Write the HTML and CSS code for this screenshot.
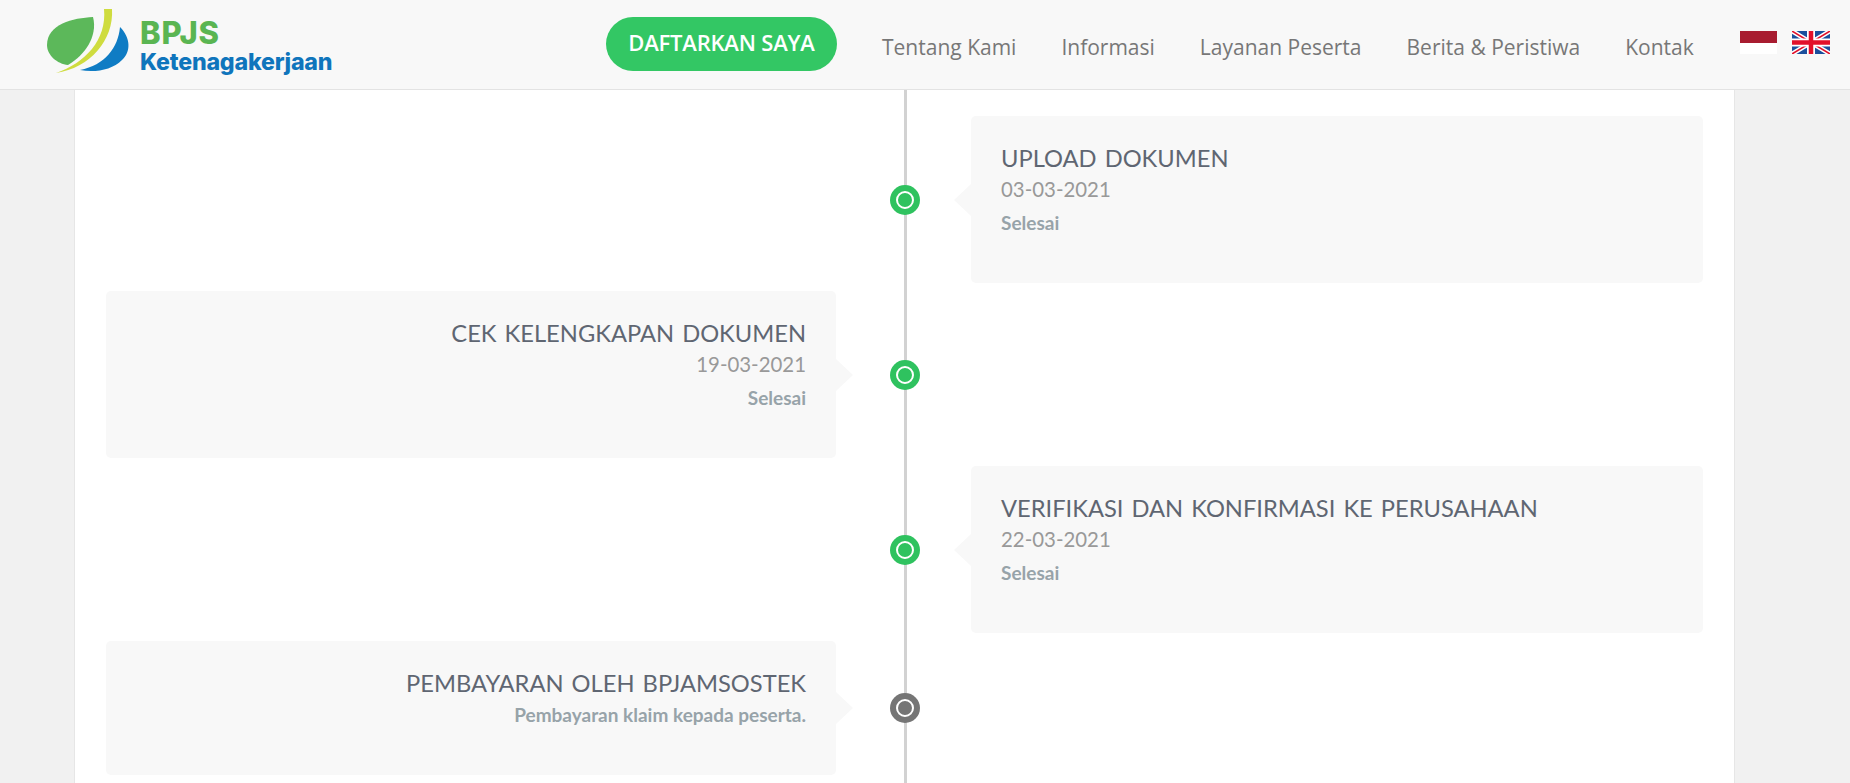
FILE: index.html
```html
<!DOCTYPE html>
<html lang="id">
<head>
<meta charset="utf-8">
<title>BPJS Ketenagakerjaan</title>
<link rel="stylesheet" href="styles.css">
</head>
<body>
<header class="topbar">
  <a class="logo" href="#">
    <svg class="logo-mark" viewBox="0 0 100 80" width="100" height="80" aria-hidden="true">
      <path fill="#5cb85a" d="M46 17C26 18 0 24 0 45C0 55 10 64 21 65C38 55 51 36 46 17Z"/>
      <path fill="#cfdc3f" d="M57 9H65C67 40 43 68 9 73C38 63 60 40 57 9Z"/>
      <path fill="#0f7cc4" d="M73 27C84 38 84 52 75 60C65 70 48 73 33 70C58 65 71 48 73 27Z"/>
    </svg>
    <span class="logo-text"><span class="logo-top">BPJS</span><span class="logo-bottom">Ketenagakerjaan</span></span>
  </a>
  <a class="cta" href="#">DAFTARKAN SAYA</a>
  <nav class="nav">
    <a href="#">Tentang Kami</a>
    <a href="#">Informasi</a>
    <a href="#">Layanan Peserta</a>
    <a href="#">Berita &amp; Peristiwa</a>
    <a href="#">Kontak</a>
  </nav>
  <div class="flags">
    <svg width="37" height="23" viewBox="0 0 37 23" aria-hidden="true"><rect width="37" height="12" fill="#a81c30"/><rect y="12" width="37" height="11" fill="#fff"/></svg>
    <svg width="38" height="23" viewBox="0 0 38 23" aria-hidden="true">
      <rect width="38" height="23" fill="#1c4f9c"/>
      <path d="M0 0L38 23M38 0L0 23" stroke="#fff" stroke-width="4.5"/>
      <path d="M0 0L38 23M38 0L0 23" stroke="#e2102a" stroke-width="1.5"/>
      <path d="M19 0V23M0 11.5H38" stroke="#fff" stroke-width="8"/>
      <path d="M19 0V23M0 11.5H38" stroke="#e2102a" stroke-width="4.5"/>
    </svg>
  </div>
</header>
<main class="page">
  <section class="timeline">
    <div class="row">
      <div class="slot"></div>
      <div class="dot-cell"><span class="dot"></span></div>
      <article class="card card-right">
        <h3>UPLOAD DOKUMEN</h3>
        <p class="date">03-03-2021</p>
        <p class="status">Selesai</p>
      </article>
    </div>
    <div class="row">
      <article class="card card-left">
        <h3>CEK KELENGKAPAN DOKUMEN</h3>
        <p class="date">19-03-2021</p>
        <p class="status">Selesai</p>
      </article>
      <div class="dot-cell"><span class="dot"></span></div>
      <div class="slot"></div>
    </div>
    <div class="row">
      <div class="slot"></div>
      <div class="dot-cell"><span class="dot"></span></div>
      <article class="card card-right">
        <h3>VERIFIKASI DAN KONFIRMASI KE PERUSAHAAN</h3>
        <p class="date">22-03-2021</p>
        <p class="status">Selesai</p>
      </article>
    </div>
    <div class="row">
      <article class="card card-left card-short">
        <h3>PEMBAYARAN OLEH BPJAMSOSTEK</h3>
        <p class="status status-tight">Pembayaran klaim kepada peserta.</p>
      </article>
      <div class="dot-cell"><span class="dot dot-pending"></span></div>
      <div class="slot"></div>
    </div>
  </section>
</main>
</body>
</html>
```

FILE: styles.css
```css
* { box-sizing: border-box; }
html, body { height: 100%; }
body {
  margin: 0;
  background: #f1f1f1;
  display: flex;
  flex-direction: column;
  overflow: hidden;
  font-family: "Lato", "Noto Sans", sans-serif;
}
a { text-decoration: none; }
.topbar {
  flex: none;
  height: 90px;
  background: #f8f8f8;
  border-bottom: 1px solid #e3e3e3;
  display: flex;
  align-items: flex-start;
  padding-left: 47px;
}
.logo { display: flex; width: 559px; }
.logo-mark { flex: none; }
.logo-text {
  display: flex;
  flex-direction: column;
  margin-left: -7px;
  padding-top: 15px;
  font-family: "Inter", sans-serif;
  font-weight: 800;
}
.logo-top { color: #5ab552; font-size: 31px; line-height: 36px; letter-spacing: .8px; }
.logo-bottom { color: #0f75bc; font-size: 23.2px; line-height: 23px; letter-spacing: -.2px; }
.cta {
  flex: none;
  width: 231px;
  height: 54px;
  margin-top: 17px;
  border-radius: 27px;
  background: #33c764;
  color: #fff;
  font: 600 22px/51px "Open Sans", sans-serif;
  letter-spacing: -.2px;
  text-align: center;
}
.nav {
  flex: none;
  display: flex;
  gap: 45px;
  margin-left: 45px;
  padding-top: 32px;
}
.nav a {
  color: #777;
  font: 400 21px/30px "Open Sans", sans-serif;
}
.flags {
  flex: none;
  display: flex;
  gap: 15px;
  margin-left: 46px;
  padding-top: 31px;
}
.flags svg { display: block; }
.page {
  flex: 1;
  min-height: 0;
  width: 1661px;
  margin-left: 74px;
  background: #fff;
  border-left: 1px solid #e6e6e6;
  border-right: 1px solid #e6e6e6;
  padding: 26px 30px 0 31px;
}
.timeline {
  position: relative;
  display: flex;
  flex-direction: column;
  gap: 8px;
  height: 100%;
}
.timeline::before {
  content: "";
  position: absolute;
  left: 798px;
  top: -26px;
  bottom: 0;
  width: 3px;
  background: #d2d2d2;
}
.row {
  display: grid;
  grid-template-columns: 730px 135px 732px;
}
.dot-cell {
  position: relative;
  display: flex;
  align-items: center;
  padding-left: 54px;
}
.dot {
  width: 30px;
  height: 30px;
  border-radius: 50%;
  background: #2fc25f;
  display: flex;
  align-items: center;
  justify-content: center;
}
.dot::after {
  content: "";
  box-sizing: border-box;
  width: 18px;
  height: 18px;
  border: 2px solid #fff;
  border-radius: 50%;
}
.dot-pending { background: #757575; }
.card {
  position: relative;
  height: 167px;
  padding: 26px 30px 0;
  background: #f8f8f8;
  border-radius: 5px;
}
.card-short { height: 134px; }
.card::after {
  content: "";
  position: absolute;
  top: 50%;
  margin-top: -16px;
  border-top: 16px solid transparent;
  border-bottom: 16px solid transparent;
}
.card-right::after { right: 100%; border-right: 17px solid #f8f8f8; }
.card-left::after { left: 100%; border-left: 17px solid #f8f8f8; }
.card-left { text-align: right; }
.card h3 {
  margin: 0;
  color: #5f6672;
  font-size: 23.7px;
  line-height: 32px;
  font-weight: 400;
  word-spacing: 2px;
}
.date {
  margin: 0;
  color: #999;
  font-size: 20.4px;
  line-height: 30px;
}
.status {
  margin: 7px 0 0;
  color: #97a3a9;
  font-size: 19px;
  line-height: 24px;
  font-weight: 700;
}
.status-tight { margin-top: 4px; }
```
